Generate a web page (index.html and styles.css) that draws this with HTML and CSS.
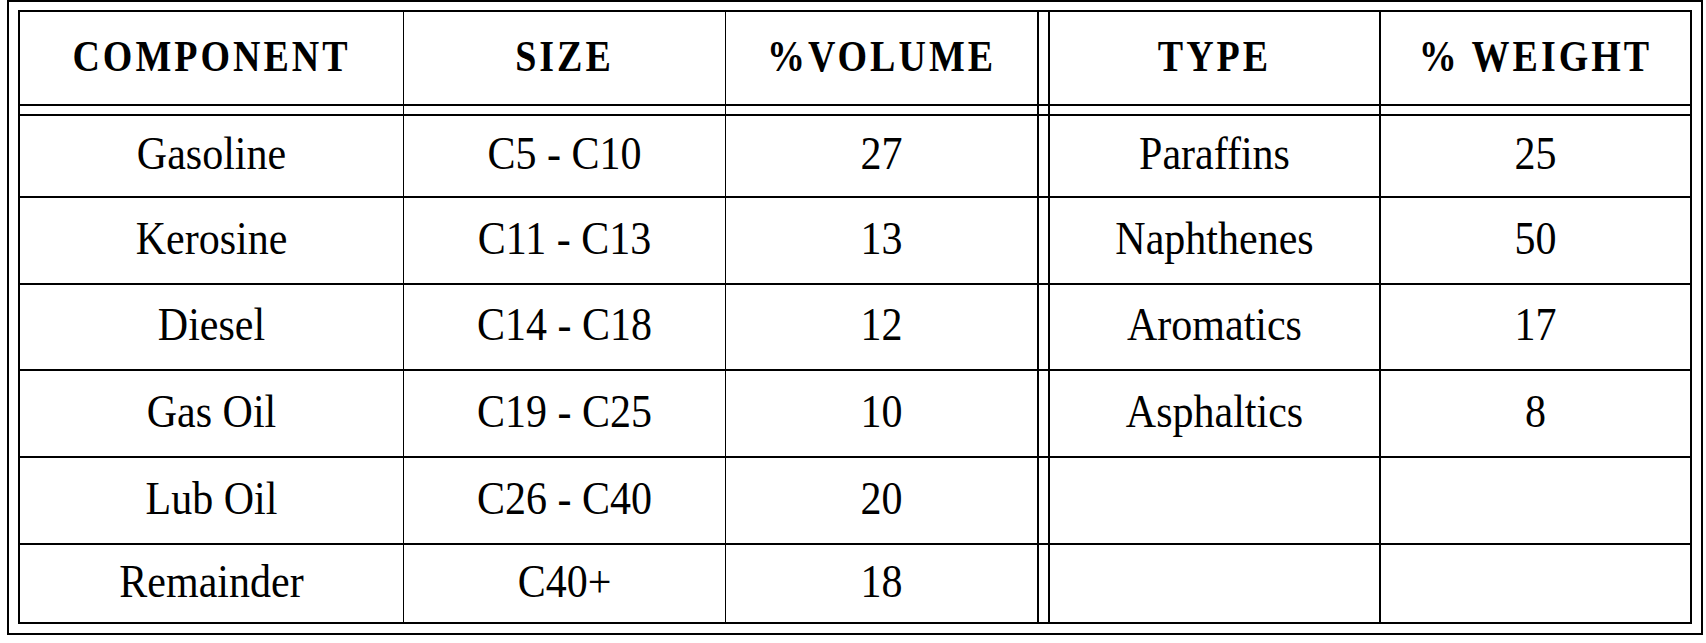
FILE: index.html
```html
<!DOCTYPE html>
<html lang="en">
<head>
  <meta charset="UTF-8" />
  <title>Crude Oil Composition</title>
  <link rel="stylesheet" href="styles.css">
</head>
<body>
  <div class="frame">
    <table class="crude">
      <thead>
        <tr class="head">
          <th class="c-comp"><span class="t">COMPONENT</span></th>
          <th class="c-size"><span class="t">SIZE</span></th>
          <th class="c-vol"><span class="t">%VOLUME</span></th>
          <th class="sep"></th>
          <th class="c-type"><span class="t">TYPE</span></th>
          <th class="c-wt"><span class="t">% WEIGHT</span></th>
        </tr>
        <tr class="gap">
          <td class="thin"></td><td class="thin"></td><td></td><td class="sep"></td><td></td><td></td>
        </tr>
      </thead>
      <tbody>
        <tr class="r1">
          <td class="thin"><span class="t">Gasoline</span></td><td class="thin"><span class="t">C5 - C10</span></td><td><span class="t">27</span></td>
          <td class="sep"></td><td><span class="t">Paraffins</span></td><td><span class="t">25</span></td>
        </tr>
        <tr class="r2">
          <td class="thin"><span class="t">Kerosine</span></td><td class="thin"><span class="t">C11 - C13</span></td><td><span class="t">13</span></td>
          <td class="sep"></td><td><span class="t">Naphthenes</span></td><td><span class="t">50</span></td>
        </tr>
        <tr class="r3">
          <td class="thin"><span class="t">Diesel</span></td><td class="thin"><span class="t">C14 - C18</span></td><td><span class="t">12</span></td>
          <td class="sep"></td><td><span class="t">Aromatics</span></td><td><span class="t">17</span></td>
        </tr>
        <tr class="r4">
          <td class="thin"><span class="t">Gas Oil</span></td><td class="thin"><span class="t">C19 - C25</span></td><td><span class="t">10</span></td>
          <td class="sep"></td><td><span class="t">Asphaltics</span></td><td><span class="t">8</span></td>
        </tr>
        <tr class="r5">
          <td class="thin"><span class="t">Lub Oil</span></td><td class="thin"><span class="t">C26 - C40</span></td><td><span class="t">20</span></td>
          <td class="sep"></td><td></td><td></td>
        </tr>
        <tr class="r6">
          <td class="thin"><span class="t">Remainder</span></td><td class="thin"><span class="t">C40+</span></td><td><span class="t">18</span></td>
          <td class="sep"></td><td></td><td></td>
        </tr>
      </tbody>
    </table>
  </div>
</body>
</html>
```

FILE: styles.css
```css
* {
  box-sizing: border-box;
}

body {
  margin: 0;
  padding: 0;
  background: #fff;
  color: #000;
  font-family: 'Liberation Serif', 'Times New Roman', serif;
}

.frame {
  margin-left: 7px;
  width: 1696px;
  height: 635px;
  border: 2px solid #000;
  padding: 8px 9px 9px 9px;
}

.crude {
  width: 1674px;
  table-layout: fixed;
  border-collapse: separate;
  border-spacing: 0;
  border-top: 2px solid #000;
  border-left: 2px solid #000;
}

.crude th,
.crude td {
  padding: 0;
  text-align: center;
  vertical-align: middle;
  border-right: 2px solid #000;
  border-bottom: 2px solid #000;
  font-size: 42px;
  font-weight: normal;
}

.crude .thin,
.crude .c-comp,
.crude .c-size {
  border-right-width: 1px;
}

.crude th {
  font-weight: bold;
  font-size: 38px;
  letter-spacing: 3px;
}

/* the source type is drawn a little taller than Times */
.t {
  display: inline-block;
  transform: translateY(-2px) scaleY(1.08);
}

.crude th .t {
  transform: translateY(-2px) scaleY(1.15);
}

.c-comp { width: 384px; }
.c-size { width: 322px; }
.c-vol  { width: 313px; }
.crude .sep { width: 11px; }
.c-type { width: 331px; }
.c-wt   { width: 311px; }

.head th { height: 94px; }
.gap td  { height: 10px; }
.r1 td { height: 82px; }
.r2 td { height: 87px; }
.r3 td { height: 86px; }
.r4 td { height: 87px; }
.r5 td { height: 87px; }
.r6 td { height: 79px; }
```
